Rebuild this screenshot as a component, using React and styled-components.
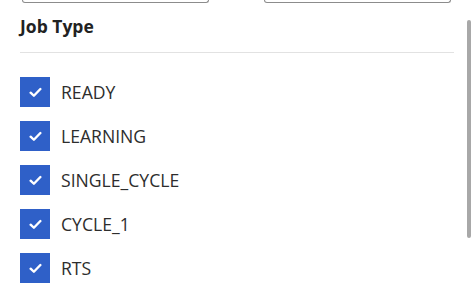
import styled, { createGlobalStyle } from "styled-components";

const Global = createGlobalStyle`
  html, body {
    margin: 0;
    padding: 0;
    background: #fff;
    overflow: hidden;
  }
  body {
    font-family: "Open Sans", "Noto Sans", sans-serif;
    color: #333;
  }
`

const Panel = styled.div`
  position: relative;
  width: 474px;
  height: 296px;
  box-sizing: border-box;
  padding: 0 20px;
`

const FieldRow = styled.div`
  display: flex;
  justify-content: space-between;
  width: 434px;
  box-sizing: border-box;
  padding: 0 3px 0 2px;
`

const Field = styled.div`
  width: 185px;
  height: 2px;
  border: 1px solid #8c8c8c;
  border-top: none;
  border-radius: 0 0 4px 4px;
`

const Title = styled.h3`
  margin: 0;
  padding: 12px 0 14px;
  font-size: 17.5px;
  font-weight: 700;
  line-height: 23px;
  color: #222;
  width: 434px;
  border-bottom: 1px solid #e2e2e2;
`

const List = styled.div`
  display: flex;
  flex-direction: column;
  gap: 14px;
  padding-top: 24px;
`

const Option = styled.label`
  display: flex;
  align-items: center;
  gap: 11px;
  font-size: 17.6px;
  color: #2d2d2d;
  height: 30px;
`

const Box = styled.span`
  flex: none;
  width: 30px;
  height: 30px;
  background: ${(p) => (p.checked ? "#2f60c8" : "#fff")};
  display: flex;
  align-items: center;
  justify-content: center;
`

const Scrollbar = styled.div`
  position: absolute;
  left: 467px;
  top: 20px;
  width: 4px;
  height: 218px;
  border-radius: 2px;
  background: #a8a8a8;
`

const types = ["READY", "LEARNING", "SINGLE_CYCLE", "CYCLE_1", "RTS"];

function Check() {
  return (
    <svg width="13" height="11" viewBox="0 0 12 10">
      <path d="M1.5 5.2 L4.5 8 L10.5 1.8" fill="none" stroke="#fff" strokeWidth="2.2" strokeLinecap="round" strokeLinejoin="round" />
    </svg>
  );
}

export default function App() {
  return (
    <>
      <Global />
      <Panel>
        <FieldRow>
          <Field />
          <Field />
        </FieldRow>
        <Title>Job Type</Title>
        <List>
          {types.map((t) => (
            <Option key={t}>
              <Box checked>
                <Check />
              </Box>
              {t}
            </Option>
          ))}
        </List>
        <Scrollbar />
      </Panel>
    </>
  );
}
